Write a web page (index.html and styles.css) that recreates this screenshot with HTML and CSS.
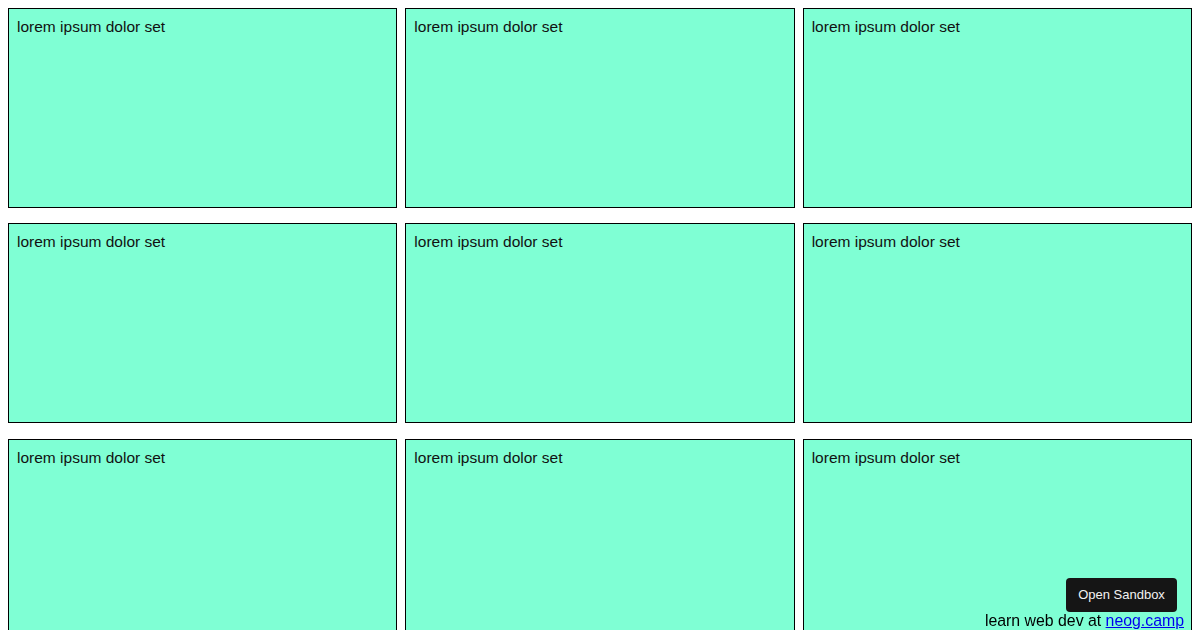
FILE: index.html
```html
<!DOCTYPE html>
<html lang="en">
<head>
  <meta charset="UTF-8">
  <title>Grid</title>
  <link rel="stylesheet" href="styles.css">
</head>
<body>
  <div class="grid">
    <div class="card">lorem ipsum dolor set</div>
    <div class="card">lorem ipsum dolor set</div>
    <div class="card">lorem ipsum dolor set</div>
    <div class="card">lorem ipsum dolor set</div>
    <div class="card">lorem ipsum dolor set</div>
    <div class="card">lorem ipsum dolor set</div>
    <div class="card">lorem ipsum dolor set</div>
    <div class="card">lorem ipsum dolor set</div>
    <div class="card">lorem ipsum dolor set</div>
  </div>

  <button class="sandbox-btn">Open Sandbox</button>
  <div class="credit">learn web dev at <a href="#">neog.camp</a></div>
</body>
</html>
```
FILE: styles.css
```css
body {
  margin: 8px;
  font-family: "Liberation Sans", Arial, sans-serif;
  font-size: 16px;
  background-color: #fff;
}

.grid {
  display: grid;
  grid-template-columns: repeat(3, 1fr);
  column-gap: 8px;
  row-gap: 15.4px;
}

.card {
  box-sizing: border-box;
  height: 200px;
  padding: 9px 8px 8px;
  border: 1px solid #000;
  background-color: aquamarine;
  color: #111;
  font-size: 15.5px;
}

.sandbox-btn {
  position: fixed;
  right: 23px;
  bottom: 18px;
  width: 111px;
  height: 34px;
  padding: 0 0 2px;
  border: none;
  border-radius: 4px;
  background-color: #151515;
  color: #f2f2f2;
  font-family: "Liberation Sans", Arial, sans-serif;
  font-size: 13px;
}

.credit {
  position: fixed;
  right: 16px;
  bottom: 0;
  line-height: 18px;
  font-size: 15.85px;
  color: #000;
}

.credit a {
  color: #00e;
}
```
